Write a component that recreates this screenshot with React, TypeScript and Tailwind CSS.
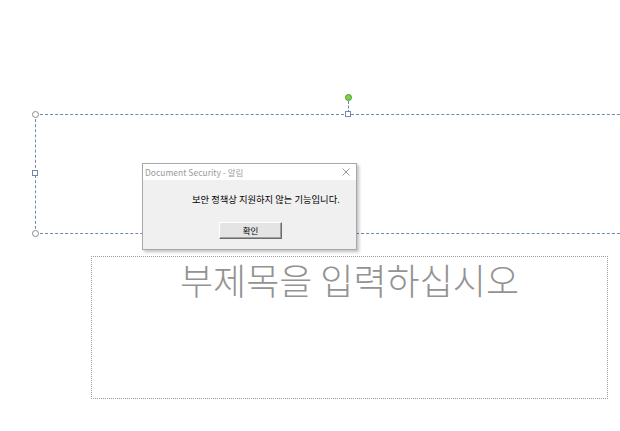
import React from "react";

export default function App() {
  return (
    <div
      className="relative w-[620px] h-[431px] overflow-hidden bg-white"
      style={{ fontFamily: '"Noto Sans CJK KR", "Noto Sans", sans-serif' }}
    >
      {/* Title placeholder (selected) */}
      <div className="relative ml-[35px] mt-[114px] h-[120px] w-[620px] border border-dashed border-[#7189ad]">
        <div className="absolute left-[312px] top-[-14px] h-[12px] border-l border-dashed border-[#7189ad]" />
        <div className="absolute left-[309px] top-[-21px] h-[7px] w-[7px] rounded-full border border-[#4f9a2a] bg-[#7ed04b]" />
        <div className="absolute left-[309px] top-[-4px] h-[6px] w-[6px] border border-[#7189ad] bg-white" />
        <div className="absolute left-[-4px] top-[-4px] h-[7px] w-[7px] rounded-full border border-[#8a8a8a] bg-white" />
        <div className="absolute left-[-4px] bottom-[-4px] h-[7px] w-[7px] rounded-full border border-[#8a8a8a] bg-white" />
        <div className="absolute left-[-4px] top-[55px] h-[6px] w-[6px] border border-[#7189ad] bg-white" />
      </div>

      {/* Subtitle placeholder */}
      <div className="ml-[91px] mt-[22px] h-[143px] w-[517px] border border-dotted border-[#9a9a9a]">
        <div className="mt-[2px] text-center text-[36px] font-light leading-[40px] text-[#939393]">
          부제목을 입력하십시오
        </div>
      </div>

      {/* Dialog */}
      <div className="absolute left-[142px] top-[163px] flex h-[87px] w-[215px] flex-col border border-[#a8a8a8] bg-[#f0f0f0] shadow-[2px_2px_3px_rgba(0,0,0,0.25)]">
        <div className="flex h-[16px] items-center justify-between bg-white pl-[2px] pr-[5px]">
          <span className="text-[8.5px] leading-none text-[#9a9a9a]">Document Security - 알림</span>
          <svg width="8" height="8" viewBox="0 0 8 8" className="mr-[1px]">
            <path d="M0.5 0.5 L7.5 7.5 M7.5 0.5 L0.5 7.5" stroke="#8a8a8a" strokeWidth="0.9" />
          </svg>
        </div>
        <div className="pl-[49px] pt-[13px] text-[9.3px] leading-[12px] text-black">
          보안 정책상 지원하지 않는 기능입니다.
        </div>
        <div className="mt-[17px] flex pl-[76px]">
          <div className="flex h-[17px] w-[63px] items-center justify-center border border-t-white border-l-white border-b-[#6b6b6b] border-r-[#6b6b6b] bg-[#e4e4e4] text-[8.5px] text-black shadow-[inset_-1px_-1px_0_#a0a0a0]">
            확인
          </div>
        </div>
      </div>
    </div>
  );
}
